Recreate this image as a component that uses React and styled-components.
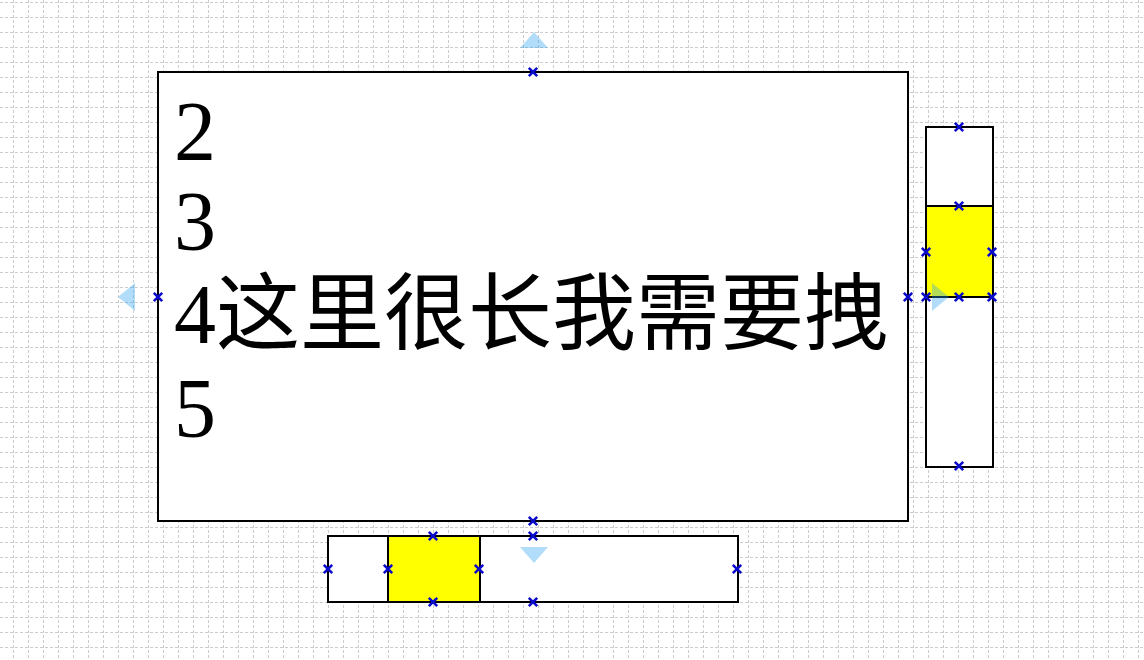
import React from "react";
import styled, { createGlobalStyle } from "styled-components";

const GlobalStyle = createGlobalStyle`
  html, body {
    margin: 0;
    padding: 0;
    background: #ffffff;
    overflow: hidden;
  }
`;

const Canvas = styled.div`
  position: relative;
  width: 1144px;
  height: 660px;
  overflow: hidden;
  background: #ffffff;
`;

const GridLayer = styled.svg`
  position: absolute;
  left: 0;
  top: 0;
`;

// every node on the canvas sits at its own diagram coordinates
const Node = styled.div`
  position: absolute;
  left: ${(p) => p.$x}px;
  top: ${(p) => p.$y}px;
  width: ${(p) => p.$w}px;
  height: ${(p) => p.$h}px;
  box-sizing: border-box;
  border: 2px solid #000000;
  background: #ffffff;
`;

const TextBox = styled(Node)`
  padding: 13px 0 0 15px;
  overflow: hidden;
`;

const TextLine = styled.div`
  font-family: "Liberation Serif", "Noto Sans CJK SC", serif;
  font-size: 84px;
  line-height: ${(p) => p.$lh || 91}px;
  color: #000000;
  white-space: nowrap;
`;

const Track = styled(Node)`
  display: flex;
  flex-direction: ${(p) => (p.$vertical ? "column" : "row")};
`;

const Gap = styled.div`
  flex: 0 0 ${(p) => p.$size}px;
`;

const Thumb = styled.div`
  flex: 0 0 ${(p) => p.$size}px;
  box-sizing: border-box;
  background: #ffff00;
  ${(p) =>
    p.$vertical
      ? "border-top: 2px solid #000; border-bottom: 2px solid #000;"
      : "border-left: 2px solid #000; border-right: 2px solid #000;"}
`;

const Marker = styled.svg`
  position: absolute;
  left: ${(p) => p.$x - 5}px;
  top: ${(p) => p.$y - 5}px;
  width: 10px;
  height: 10px;
  overflow: visible;
`;

const Arrow = styled.svg`
  position: absolute;
  left: ${(p) => p.$x}px;
  top: ${(p) => p.$y}px;
  overflow: visible;
`;

const gridLines = () => {
  const lines = [];
  for (let x = 13.5; x < 1144; x += 15) {
    lines.push(<line key={"v" + x} x1={x} y1={0} x2={x} y2={660} />);
  }
  for (let y = 2.5; y < 660; y += 15) {
    lines.push(<line key={"h" + y} x1={0} y1={y} x2={1144} y2={y} />);
  }
  return lines;
};

const connectionPoints = [
  // text box
  [533, 72], [158, 297], [908, 297], [533, 521],
  // vertical bar
  [959, 127], [959, 206], [926, 252], [992, 252],
  [926, 297], [959, 297], [992, 297], [959, 466],
  // horizontal bar
  [533, 536], [433, 536], [328, 569], [388, 569],
  [479, 569], [737, 569], [433, 602], [533, 602],
];

const X = ({ x, y }) => (
  <Marker $x={x} $y={y} viewBox="0 0 10 10">
    <path d="M0.8 0.8 L9.2 9.2 M9.2 0.8 L0.8 9.2" stroke="#0b0bcc" strokeWidth="2.6" />
  </Marker>
);

const ARROW_FILL = "rgba(41, 160, 242, 0.36)";

const HoverArrows = () => (
  <>
    <Arrow $x={520} $y={32} width="28" height="16">
      <path d="M14 0 L28 16 L0 16 Z" fill={ARROW_FILL} />
    </Arrow>
    <Arrow $x={520} $y={547} width="28" height="16">
      <path d="M0 0 L28 0 L14 16 Z" fill={ARROW_FILL} />
    </Arrow>
    <Arrow $x={118} $y={283} width="17" height="28">
      <path d="M0 14 L17 0 L17 28 Z" fill={ARROW_FILL} />
    </Arrow>
    <Arrow $x={932} $y={283} width="17" height="28">
      <path d="M0 0 L17 14 L0 28 Z" fill={ARROW_FILL} />
    </Arrow>
  </>
);

export default function App() {
  return (
    <>
      <GlobalStyle />
      <Canvas>
        <GridLayer width="1144" height="660">
          <g stroke="#cccccc" strokeWidth="1" strokeDasharray="3 2">
            {gridLines()}
          </g>
        </GridLayer>

        <TextBox $x={157} $y={71} $w={752} $h={451}>
          <TextLine>2</TextLine>
          <TextLine $lh={90}>3</TextLine>
          <TextLine $lh={96}>4这里很长我需要拽</TextLine>
          <TextLine>5</TextLine>
        </TextBox>

        <Track $vertical $x={925} $y={126} $w={69} $h={342}>
          <Gap $size={77} />
          <Thumb $vertical $size={93} />
        </Track>

        <Track $x={327} $y={535} $w={412} $h={68}>
          <Gap $size={58} />
          <Thumb $size={94} />
        </Track>

        <HoverArrows />
        {connectionPoints.map(([x, y]) => (
          <X key={x + "-" + y} x={x} y={y} />
        ))}
      </Canvas>
    </>
  );
}
